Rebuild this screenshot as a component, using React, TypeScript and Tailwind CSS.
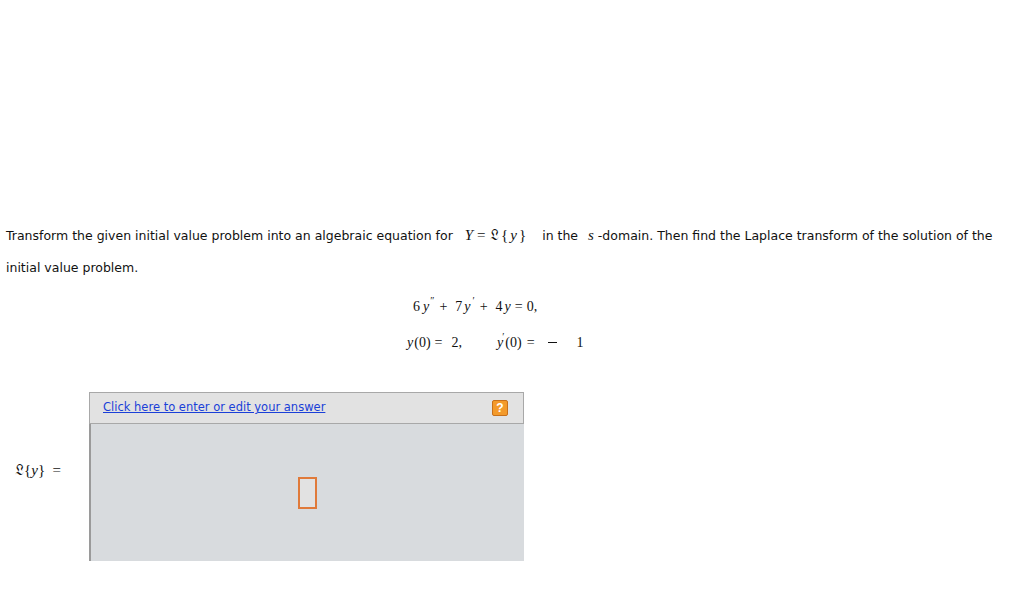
import React from "react";

const serif = { fontFamily: '"Liberation Serif", "DejaVu Serif", serif' };
const frak = { fontFamily: '"DejaVu Sans", "DejaVu Serif", serif' };

function Sup({ children, className = "" }: { children: React.ReactNode; className?: string }) {
  return <span className={"text-[10px] relative -top-[6px] " + className}>{children}</span>;
}

function Minus({ className = "" }: { className?: string }) {
  return <span className={"inline-block w-[9px] h-[1px] bg-[#111] " + className} />;
}

export default function App() {
  return (
    <div className="w-[1019px] h-[591px] bg-white overflow-hidden" style={{ fontFamily: '"DejaVu Sans", Verdana, sans-serif' }}>
      <div className="pt-[219px] pl-[6px]">
        <div className="text-[12.5px] text-[#111] leading-[32px]">
          <div className="whitespace-nowrap">
            Transform the given initial value problem into an algebraic equation for{" "}
            <span className="text-[15px] ml-[8px] mr-[12px]" style={serif}>
              <i>Y</i> = <span className="ml-[1px]" style={frak}>𝔏</span>
              <span className="ml-[2px]">{"{"}</span><i className="mx-[2px]">y</i>{"}"}
            </span>{" "}
            in the <i className="text-[15px] ml-[6px] mr-[4px]" style={serif}>s</i>-domain. Then find the Laplace transform of the solution of the
          </div>
          <div>initial value problem.</div>
        </div>
        <div className="mt-[8px] text-[14px] text-[#111]" style={serif}>
          <div className="pl-[407px] h-[28px] flex items-center whitespace-nowrap">
            <span>6</span>
            <i className="ml-[3px]">y</i>
            <Sup className="ml-[1px]">″</Sup>
            <span className="ml-[5px]">+</span>
            <span className="ml-[8px]">7</span>
            <i className="ml-[2px]">y</i>
            <Sup className="ml-[2px]">′</Sup>
            <span className="ml-[5px]">+</span>
            <span className="ml-[8px]">4</span>
            <i className="ml-[2px]">y</i>
            <span className="ml-[4px]">=</span>
            <span className="ml-[4px]">0,</span>
          </div>
          <div className="mt-[8px] pl-[401px] h-[28px] flex items-center whitespace-nowrap">
            <i>y</i>
            <span className="ml-[1px]">(0)</span>
            <span className="ml-[4px]">=</span>
            <span className="ml-[9px]">2,</span>
            <i className="ml-[35px]">y</i>
            <Sup className="-ml-[1px]">′</Sup>
            <span className="ml-[1px]">(0)</span>
            <span className="ml-[5px]">=</span>
            <Minus className="ml-[13px]" />
            <span className="ml-[20px]">1</span>
          </div>
        </div>
        <div className="mt-[36px] flex">
          <div className="w-[83px] pl-[9px] pt-[69px] text-[15px] text-[#111] whitespace-pre leading-[18px]" style={serif}>
            <span style={frak}>𝔏</span>{"{"}<i>y</i>{"}"}  =
          </div>
          <div className="w-[435px]">
            <div className="h-[32px] bg-[#e2e2e2] border border-[#a8a8a8] flex items-center justify-between pl-[13px] pr-[15px]">
              <a className="text-[11.5px] text-[#1a3fd8] underline">
                Click here to enter or edit your answer
              </a>
              <div className="w-[16px] h-[16px] rounded-[2px] bg-[#f39a2b] border border-[#c8701a] flex items-center justify-center text-white text-[12px] font-bold leading-none" style={{ fontFamily: '"Liberation Sans", sans-serif' }}>
                ?
              </div>
            </div>
            <div className="h-[137px] bg-[#d8dbde] border-l-2 border-[#9a9a9a] flex items-center">
              <div className="ml-[207px] w-[19px] h-[32px] bg-[#e2e2e2] border-2 border-[#e07a3a]" />
            </div>
          </div>
        </div>
      </div>
    </div>
  );
}
